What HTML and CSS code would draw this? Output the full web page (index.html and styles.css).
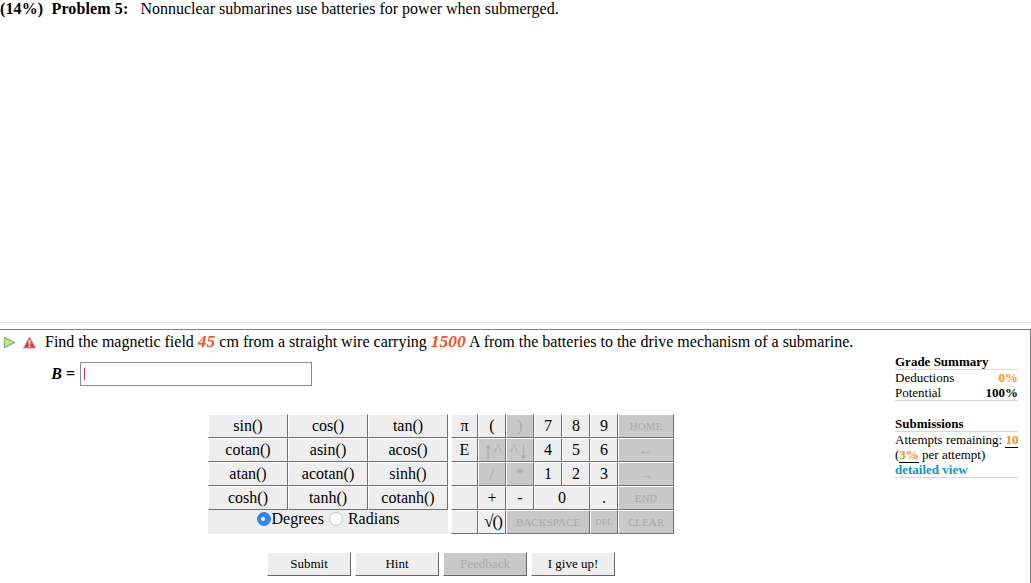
FILE: index.html
```html
<!DOCTYPE html>
<html lang="en">
<head>
    <meta charset="UTF-8">
    <meta name="viewport" content="width=device-width, initial-scale=1.0">
    <title>Problem 5</title>
    <link rel="stylesheet" href="styles.css">
</head>
<body>

<!-- Problem statement -->
<p class="statement"><b>(14%)&nbsp; Problem 5:</b>&nbsp;&nbsp; Nonnuclear submarines use batteries for power when submerged.</p>
<div class="figure-space"></div>
<div class="divider"></div>

<div class="problem">
    <div class="question">
        <div class="prompt">
            <svg class="icon-play" width="13" height="13" viewBox="0 0 13 13">
                <path d="M1.5 1.5 L11.5 6.5 L1.5 11.5 Z" fill="#c6e59c" stroke="#93c06e" stroke-width="1.4" stroke-linejoin="round"/>
            </svg>
            <svg class="icon-warn" width="13" height="13" viewBox="0 0 13 13">
                <path d="M6.5 1 L12.5 12 L0.5 12 Z" fill="#d8383a" stroke="#e98587" stroke-width="1" stroke-linejoin="round"/>
                <rect x="5.6" y="4.2" width="1.8" height="4.4" fill="#fff"/>
                <rect x="5.6" y="9.3" width="1.8" height="1.6" fill="#fff"/>
            </svg>
            <span>Find the magnetic field <b class="given">45</b> cm from a straight wire carrying <b class="given">1500</b> A from the batteries to the drive mechanism of a submarine.</span>
        </div>

        <div class="answer">
            <b class="answer-label"><i>B</i> =</b>
            <div class="answer-box"><span class="caret"></span></div>
        </div>

        <div class="keypads">
            <div class="keys functions">
                <div class="key">sin()</div>
                <div class="key">cos()</div>
                <div class="key">tan()</div>
                <div class="key">cotan()</div>
                <div class="key">asin()</div>
                <div class="key">acos()</div>
                <div class="key">atan()</div>
                <div class="key">acotan()</div>
                <div class="key">sinh()</div>
                <div class="key">cosh()</div>
                <div class="key">tanh()</div>
                <div class="key">cotanh()</div>
                <div class="angle-mode">
                    <span class="radio radio-on"></span>
                    <span>Degrees</span>
                    <span class="radio radio-second"></span>
                    <span class="radio-label">Radians</span>
                </div>
            </div>

            <div class="keys numbers">
                <div class="key">π</div>
                <div class="key">(</div>
                <div class="key off">)</div>
                <div class="key">7</div>
                <div class="key">8</div>
                <div class="key">9</div>
                <div class="key off small">HOME</div>

                <div class="key">E</div>
                <div class="key off"><span class="arrow">↑</span>^</div>
                <div class="key off">^<span class="arrow">↓</span></div>
                <div class="key">4</div>
                <div class="key">5</div>
                <div class="key">6</div>
                <div class="key off small"><span class="side-arrow">←</span></div>

                <div class="key"></div>
                <div class="key off">/</div>
                <div class="key off">*</div>
                <div class="key">1</div>
                <div class="key">2</div>
                <div class="key">3</div>
                <div class="key off small"><span class="side-arrow">→</span></div>

                <div class="key"></div>
                <div class="key">+</div>
                <div class="key">-</div>
                <div class="key span2">0</div>
                <div class="key">.</div>
                <div class="key off small">END</div>

                <div class="key"></div>
                <div class="key root">√()</div>
                <div class="key off small span3">BACKSPACE</div>
                <div class="key off tiny">DEL</div>
                <div class="key off small">CLEAR</div>
            </div>
        </div>

        <div class="actions">
            <div class="action">Submit</div>
            <div class="action">Hint</div>
            <div class="action off">Feedback</div>
            <div class="action">I give up!</div>
        </div>
    </div>

    <!-- Grade side panel -->
    <div class="summary">
        <h4 class="summary-title">Grade Summary</h4>
        <div class="summary-rows">
            <div class="summary-row"><span>Deductions</span><b class="accent">0%</b></div>
            <div class="summary-row"><span>Potential</span><b>100%</b></div>
        </div>
        <h4 class="summary-title second">Submissions</h4>
        <div class="summary-rows">
            <div class="nowrap">Attempts remaining: <b class="accent marked">10</b></div>
            <div>(<b class="accent marked">3%</b> per attempt)</div>
            <div class="detail-link">detailed view</div>
        </div>
    </div>
</div>

</body>
</html>
```

FILE: styles.css
```css
body { font-family: "Liberation Serif", "Times New Roman", serif; margin: 0; color: #000; font-size: 16px; background: #fff; }

.statement { margin: 0; height: 20px; line-height: 18px; }
.statement b { letter-spacing: 0.12px; }
.figure-space { height: 302px; }
.divider { height: 1px; background: #e2e2e2; }

.problem { display: flex; height: 254px; border-top: 1px solid #808080; border-right: 1px solid #808080; margin-top: 6px; }
.question { width: 894px; }

.prompt { display: flex; align-items: center; height: 20px; padding-top: 2px; line-height: 20px; }
.icon-play { margin-left: 3px; }
.icon-warn { margin-left: 7px; margin-right: 9px; }
.given { color: #f4532c; font-style: italic; font-size: 17.5px; line-height: 16px; }

.answer { display: flex; align-items: center; margin-top: 10px; }
.answer-label { width: 75px; text-align: right; margin-right: 5px; }
.answer-box { display: flex; align-items: center; width: 227px; height: 22px; border: 1px solid #8a8a8a; padding-left: 3px; }
.caret { width: 1px; height: 12px; background: #f0245a; }

.keypads { display: flex; margin: 28px 0 0 208px; gap: 3px; }
.keys { display: grid; grid-auto-rows: 24px; }
.functions { grid-template-columns: 80px 80px 80px; }
.numbers { grid-template-columns: 27px 28px 28px 28px 28px 28px 56px; }

.key { display: flex; align-items: center; justify-content: center; background: #eeeeee; border-style: solid; border-width: 1px; border-color: #fff #707070 #707070 #fff; box-sizing: border-box; }
.key.off { background: #c8c8c8; color: #aaa; }
.key.small { font-size: 11px; }
.key.tiny { font-size: 9px; }
.key.root { font-size: 17px; letter-spacing: -1px; padding-left: 2px; }
.arrow { font-size: 24px; line-height: 18px; }
.side-arrow { font-size: 15px; }
.span2 { grid-column: span 2; }
.span3 { grid-column: span 3; }

.angle-mode { grid-column: span 3; display: flex; align-items: flex-start; justify-content: center; background: #eeeeee; padding-top: 0; line-height: 18px; }
.radio { width: 14px; height: 14px; margin-top: 2px; border-radius: 50%; background: #fff; border: 1.5px solid #c2c2c2; box-sizing: border-box; }
.radio-on { position: relative; background: #2f86ea; border-color: #2f86ea; margin-right: 1px; }
.radio-on::after { content: ""; position: absolute; left: 3.5px; top: 3.5px; width: 4px; height: 4px; border-radius: 50%; background: #fff; }
.radio-second { margin-left: 5px; }
.radio-label { margin-left: 5px; }

.actions { display: flex; gap: 4px; margin: 18px 0 0 267px; }
.action { width: 84px; height: 24px; display: flex; align-items: center; justify-content: center; font-size: 13px; background: #eeeeee; border-style: solid; border-width: 1px; border-color: #fff #666 #666 #fff; box-sizing: border-box; }
.action.off { background: #c8c8c8; color: #aaa; }

.summary { width: 123px; margin-left: 1px; padding-top: 25px; font-size: 13px; line-height: 15px; }
.summary-title { margin: 0; font-size: 13px; line-height: 14px; border-bottom: 1px solid #d8d8d8; }
.summary-title.second { margin-top: 16px; }
.summary-rows { border-bottom: 1px solid #d8d8d8; }
.summary-row { display: flex; justify-content: space-between; }
.nowrap { white-space: nowrap; }
.accent { color: #f7931e; }
.marked { border-bottom: 1px solid #000; }
.detail-link { color: #1195c4; font-weight: bold; }
```
